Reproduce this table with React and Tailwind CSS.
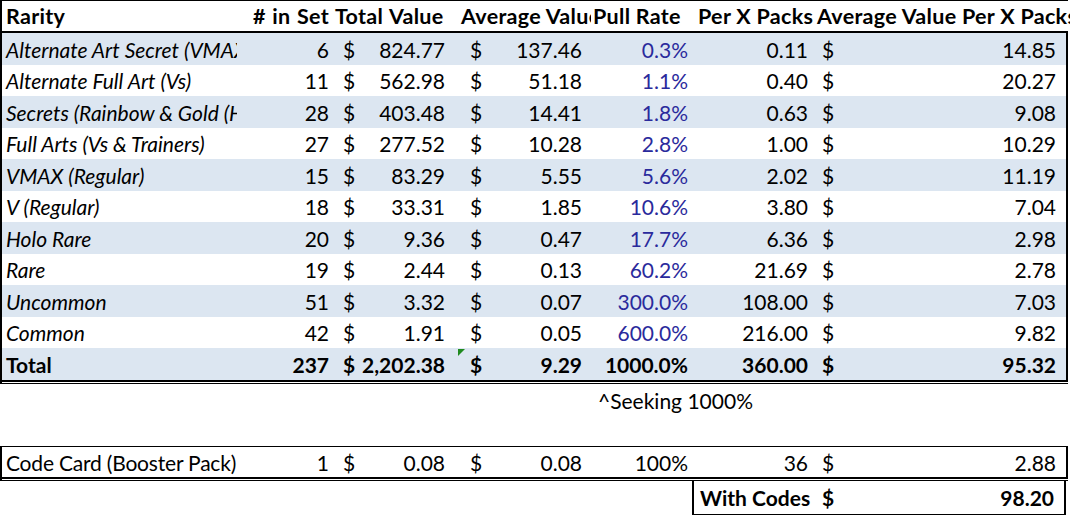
import React from 'react';

const COLS = 'grid grid-cols-[235px_95px_125px_134px_103px_119px_253px]';

const rows = [
  ['Alternate Art Secret (VMAX)', '6', '824.77', '137.46', '0.3%', '0.11', '14.85'],
  ['Alternate Full Art (Vs)', '11', '562.98', '51.18', '1.1%', '0.40', '20.27'],
  ['Secrets (Rainbow & Gold (Hyper))', '28', '403.48', '14.41', '1.8%', '0.63', '9.08'],
  ['Full Arts (Vs & Trainers)', '27', '277.52', '10.28', '2.8%', '1.00', '10.29'],
  ['VMAX (Regular)', '15', '83.29', '5.55', '5.6%', '2.02', '11.19'],
  ['V (Regular)', '18', '33.31', '1.85', '10.6%', '3.80', '7.04'],
  ['Holo Rare', '20', '9.36', '0.47', '17.7%', '6.36', '2.98'],
  ['Rare', '19', '2.44', '0.13', '60.2%', '21.69', '2.78'],
  ['Uncommon', '51', '3.32', '0.07', '300.0%', '108.00', '7.03'],
  ['Common', '42', '1.91', '0.05', '600.0%', '216.00', '9.82'],
];

function Money({ value, padL, padR }) {
  return (
    <div className={`flex items-center justify-between ${padL} ${padR}`}>
      <span>$</span>
      <span>{value}</span>
    </div>
  );
}

function DataRow({ r, blue, bold, italic, tall, rateColor, triangle }) {
  return (
    <div className={`${COLS} border-r-2 border-black ${tall ? 'h-[32px]' : 'h-[31px]'} ${blue ? 'bg-[#dce6f1]' : 'bg-white'} ${bold ? 'font-bold' : ''}`}>
      <div className={`flex items-center pl-[4px] overflow-hidden whitespace-nowrap ${italic ? 'italic' : ''}`}>{r[0]}</div>
      <div className="flex items-center justify-end pr-[3px]">{r[1]}</div>
      <Money value={r[2]} padL="pl-[11px]" padR="pr-[12px]" />
      <div className="relative">
        {triangle && (
          <div className="absolute left-[1px] top-[1px] w-0 h-0 border-t-[7px] border-t-[#1f8a1f] border-r-[7px] border-r-transparent" />
        )}
        <Money value={r[3]} padL="pl-[13px] h-full" padR="pr-[9px]" />
      </div>
      <div className={`flex items-center justify-end pr-[6px] ${rateColor}`}>{r[4]}</div>
      <div className="flex items-center justify-end pr-[5px]">{r[5]}</div>
      <Money value={r[6]} padL="pl-[9px]" padR="pr-[10px]" />
    </div>
  );
}

export default function App() {
  return (
    <div className="w-[1070px] h-[516px] bg-white overflow-hidden font-['Lato','Liberation_Sans',sans-serif] text-[21px] leading-none text-black">
      {/* Main table */}
      <div className="w-[1068px] border-l-2 border-t border-black">
        <div className={`${COLS} h-[32px] pt-[2px] border-b-2 border-black font-bold whitespace-nowrap text-[21.5px] tracking-[0.3px]`}>
          <div className="flex items-center pl-[4px]">Rarity</div>
          <div className="flex items-center justify-end pr-[3px] [word-spacing:1px]">#&nbsp;in Set</div>
          <div className="flex items-center pl-[3px] [word-spacing:1px]">Total Value</div>
          <div className="flex items-center pl-[4px] overflow-hidden">Average Value</div>
          <div className="flex items-center pl-[2px]">Pull Rate</div>
          <div className="flex items-center pl-[4px]">Per X Packs</div>
          <div className="flex items-center pl-[4px] overflow-visible">Average Value Per X Packs</div>
        </div>
        {rows.map((r, i) => (
          <DataRow key={r[0]} r={r} blue={i % 2 === 0} italic tall={i % 2 === 0} rateColor="text-[#2a2a9c]" />
        ))}
        <DataRow r={['Total', '237', '2,202.38', '9.29', '1000.0%', '360.00', '95.32']} blue bold tall triangle />
        <div className="h-[2px] bg-black" />
        <div className="h-[1px]" />
        <div className="h-[1px] bg-black" />
      </div>

      {/* Seeking note */}
      <div className={`${COLS} h-[31px] pl-[2px]`}>
        <div />
        <div />
        <div />
        <div />
        <div className="flex items-end pb-[4px] pl-[7px] whitespace-nowrap">^Seeking 1000%</div>
      </div>
      <div className="h-[31px]" />

      {/* Code card table */}
      <div className="w-[1068px] border-l-2 border-t border-black">
        <div className={`${COLS} h-[30px] border-r-2 border-black`}>
          <div className="flex items-center pl-[4px] whitespace-nowrap tracking-[-0.2px]">Code Card (Booster Pack)</div>
          <div className="flex items-center justify-end pr-[3px]">1</div>
          <Money value="0.08" padL="pl-[11px]" padR="pr-[12px]" />
          <Money value="0.08" padL="pl-[13px]" padR="pr-[9px]" />
          <div className="flex items-center justify-end pr-[6px]">100%</div>
          <div className="flex items-center justify-end pr-[5px]">36</div>
          <Money value="2.88" padL="pl-[9px]" padR="pr-[10px]" />
        </div>
        <div className="h-[2px] bg-black" />
        <div className="h-[1px]" />
        <div className="h-[1px] bg-black" />
      </div>
      <div className={`${COLS} h-[34px] pl-[2px] w-[1068px] font-bold`}>
        <div />
        <div />
        <div />
        <div />
        <div className="border-r-2 border-black" />
        <div className="flex items-center pl-[6px] whitespace-nowrap border-b border-black">With Codes</div>
        <div className="border-r-2 border-b border-black">
          <Money value="98.20" padL="pl-[9px] h-full" padR="pr-[10px]" />
        </div>
      </div>
    </div>
  );
}
